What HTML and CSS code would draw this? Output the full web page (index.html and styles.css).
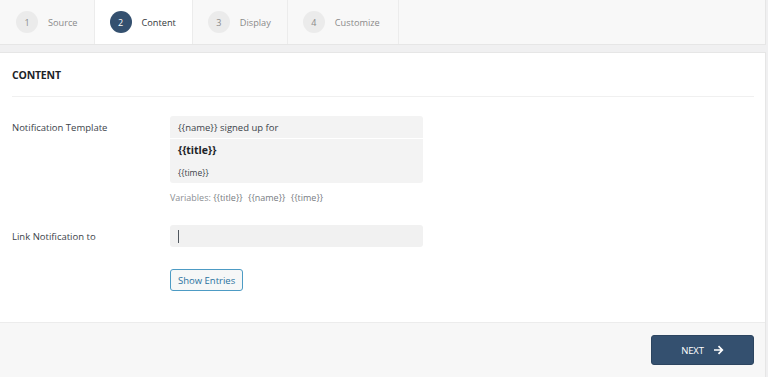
FILE: index.html
```html
<!DOCTYPE html>
<html lang="en">
<head>
    <meta charset="UTF-8">
    <meta name="viewport" content="width=device-width, initial-scale=1.0">
    <title>Notification Setup</title>
    <link rel="stylesheet" href="styles.css">
</head>
<body>
    <div class="wizard">
        <div class="steps">
            <div class="step"><span class="step-num">1</span>Source</div>
            <div class="step active"><span class="step-num">2</span>Content</div>
            <div class="step"><span class="step-num">3</span>Display</div>
            <div class="step"><span class="step-num">4</span>Customize</div>
        </div>
        <div class="panel">
            <div class="panel-body">
                <h2>CONTENT</h2>
                <div class="field">
                    <label class="field-label">Notification Template</label>
                    <div class="field-control">
                        <div class="template">
                            <div class="tpl-row tpl-first">{{name}} signed up for</div>
                            <div class="tpl-row tpl-title">{{title}}</div>
                            <div class="tpl-row tpl-time">{{time}}</div>
                        </div>
                        <p class="variables">Variables: <span>{{title}}</span> <span>{{name}}</span> <span>{{time}}</span></p>
                    </div>
                </div>
                <div class="field field-link">
                    <label class="field-label">Link Notification to</label>
                    <div class="field-control">
                        <div class="text-input"><span class="caret"></span></div>
                        <button class="entries-btn">Show Entries</button>
                    </div>
                </div>
            </div>
            <div class="panel-footer">
                <button class="next-btn">NEXT
                    <svg width="11" height="10" viewBox="0 0 11 10"><path d="M1 5h8M5.5 1.2L9.3 5 5.5 8.8" fill="none" stroke="#fff" stroke-width="1.7"/></svg>
                </button>
            </div>
        </div>
    </div>
</body>
</html>
```

FILE: styles.css
```css
body {
    font-family: 'Open Sans', 'Noto Sans', sans-serif;
    margin: 0;
    background-color: #f0f0f1;
    color: #3c434a;
    font-size: 9.5px;
}

.wizard {
    width: 766px;
}

.steps {
    display: flex;
    height: 44px;
    background-color: #f8f8f8;
    border-bottom: 1px solid #e6e6e6;
    border-right: 1px solid #e6e6e6;
}

.step {
    display: flex;
    align-items: center;
    padding: 0 16px 0 15px;
    color: #8a8a8a;
    font-size: 9.2px;
    border-right: 1px solid #ececec;
}

.step:first-child {
    padding-left: 16px;
}

.step:last-child {
    padding-right: 18px;
}

.step-num {
    width: 22px;
    height: 22px;
    border-radius: 50%;
    background-color: #ebebeb;
    color: #8a8a8a;
    display: flex;
    align-items: center;
    justify-content: center;
    margin-right: 10px;
    font-size: 9px;
}

.step.active {
    background-color: #fff;
    color: #32373c;
}

.step.active .step-num {
    background-color: #34506f;
    color: #fff;
}

.panel {
    margin-top: 7px;
    background-color: #fff;
    border: 1px solid #e6e6e6;
    border-left: none;
}

.panel-body {
    padding: 13px 11px 31px 12px;
}

h2 {
    margin: 0;
    font-size: 10.5px;
    font-weight: 700;
    color: #1d2327;
    letter-spacing: -0.2px;
    padding: 2px 0 14px;
    border-bottom: 1px solid #f0f0f0;
}

.field {
    display: flex;
    margin-top: 19px;
}

.field-label {
    width: 158px;
    padding-top: 5px;
    color: #3c434a;
}

.field-control {
    width: 253px;
}

.template {
    display: flex;
    flex-direction: column;
    gap: 0.5px;
}

.tpl-row {
    background-color: #f3f3f3;
    padding: 0 8px;
    height: 22px;
    display: flex;
    align-items: center;
    color: #3c434a;
}

.tpl-first {
    border-radius: 3px 3px 0 0;
}

.tpl-title {
    font-size: 10.5px;
    font-weight: 700;
    color: #1d2327;
}

.tpl-time {
    font-size: 8.5px;
    border-radius: 0 0 3px 3px;
}

.variables {
    margin: 8px 0 0;
    color: #8c8f94;
    font-size: 9px;
}

.variables span {
    color: #787c82;
    margin-right: 3px;
}

.field-link {
    margin-top: 21px;
}

.field-link .field-label {
    padding-top: 5px;
}

.text-input {
    height: 22px;
    background-color: #f1f1f1;
    border-radius: 3px;
    display: flex;
    align-items: center;
    padding-left: 8px;
}

.caret {
    width: 1px;
    height: 13px;
    background-color: #50575e;
}

.entries-btn {
    margin-top: 22px;
    height: 22px;
    padding: 0 7px;
    background-color: #f6f7f7;
    border: 1px solid #4d9bc4;
    border-radius: 3px;
    color: #2a72a0;
    font-family: inherit;
    font-size: 9.5px;
    cursor: pointer;
}

.panel-footer {
    display: flex;
    justify-content: flex-end;
    background-color: #f7f7f7;
    border-top: 1px solid #ececec;
    padding: 12px 11px 12px 0;
}

.next-btn {
    width: 103px;
    height: 30px;
    background-color: #34506f;
    color: #fff;
    border: 1px solid #2c4560;
    border-radius: 3px;
    font-family: inherit;
    font-size: 9.5px;
    display: flex;
    align-items: center;
    justify-content: center;
    gap: 9px;
    letter-spacing: -0.2px;
    cursor: pointer;
}
```
